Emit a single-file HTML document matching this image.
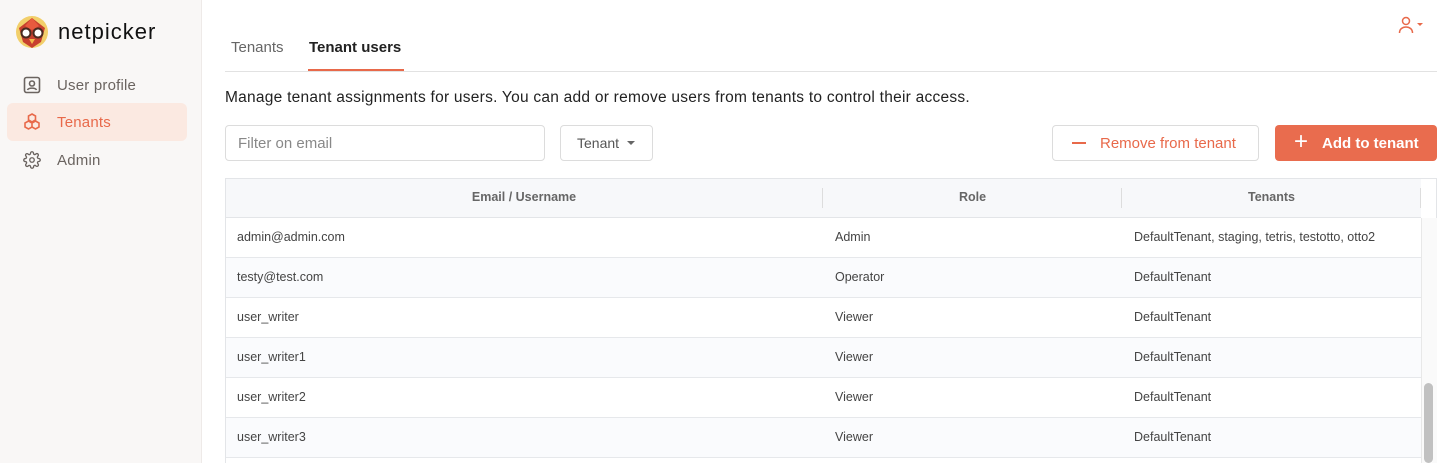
<!DOCTYPE html><html><head><style>
*{box-sizing:border-box;margin:0;padding:0}
html{overflow:hidden}
body{width:1451px;height:463px;overflow:hidden;font-family:"Liberation Sans",sans-serif;background:#fff;position:relative;color:#222}
.sb{position:absolute;left:0;top:0;width:202px;height:463px;background:#f9f7f6;border-right:1px solid #eeeae8}
.logo{position:absolute;left:15px;top:14px;display:flex;align-items:center}
.logo span{font-size:22px;margin-left:9px;color:#111;letter-spacing:1px}
.nav{position:absolute;left:7px;width:180px;height:38px;border-radius:6px;display:flex;align-items:center;padding-left:16px;font-size:15px;color:#6b6460;letter-spacing:.2px}
.nav svg{margin-right:16px}
.act{background:#fbe9e1;color:#e8694a}
.a{position:absolute}
.tab{font-size:15px;top:39px}
.btn{position:absolute;top:125px;height:36px;border-radius:4px;font-size:15px;display:flex;align-items:center}
table{position:absolute;left:225px;top:178px;width:1196px;border-collapse:collapse;font-size:12.5px;color:#444}
th{height:39px;background:#f7f8fa;font-weight:bold;color:#666;border-bottom:1px solid #e3e5e8;position:relative}
td{height:40px;padding-left:12px;border-bottom:1px solid #e6e8eb}
tr:nth-child(odd) td{background:#fafbfd}
</style></head><body>
<div class="sb">
 <div class="logo"><svg width="34" height="36" viewBox="0 0 34 36"><circle cx="17" cy="18" r="16" fill="#f2cf6a"/><path d="M17 4 L30 14 L26 28 L17 34 L8 28 L4 14Z" fill="#c7402e"/><path d="M17 4 L24 12 L17 16 L10 12Z" fill="#e85a3e"/><circle cx="11" cy="19" r="4.5" fill="#fff" stroke="#4a2a20" stroke-width="2"/><circle cx="23" cy="19" r="4.5" fill="#fff" stroke="#4a2a20" stroke-width="2"/><path d="M14 25 L20 25 L17 30Z" fill="#f2b84a"/></svg><span>netpicker</span></div>
 <div class="nav" style="top:66px"><svg width="18" height="18" viewBox="0 0 18 18" fill="none" stroke="#6b6460" stroke-width="1.6"><rect x="1.5" y="1.5" width="15" height="15" rx="2"/><circle cx="9" cy="7.5" r="2.5"/><path d="M4.5 14c1-2.5 8-2.5 9 0"/></svg>User profile</div>
 <div class="nav act" style="top:103px"><svg width="18" height="18" viewBox="0 0 18 18" fill="none" stroke="#e8694a" stroke-width="1.6"><path d="M9 1l3.5 2v4L9 9 5.5 7V3z M5.5 8l3.5 2v4l-3.5 2L2 14v-4z M12.5 8L16 10v4l-3.5 2L9 14v-4z"/></svg>Tenants</div>
 <div class="nav" style="top:141px"><svg width="18" height="18" viewBox="0 0 24 24" fill="none" stroke="#6b6460" stroke-width="1.8"><circle cx="12" cy="12" r="3"/><path d="M19.4 15a1.7 1.7 0 0 0 .3 1.8l.1.1a2 2 0 1 1-2.8 2.8l-.1-.1a1.7 1.7 0 0 0-1.8-.3 1.7 1.7 0 0 0-1 1.5V21a2 2 0 1 1-4 0v-.1a1.7 1.7 0 0 0-1.1-1.5 1.7 1.7 0 0 0-1.8.3l-.1.1a2 2 0 1 1-2.8-2.8l.1-.1a1.7 1.7 0 0 0 .3-1.8 1.7 1.7 0 0 0-1.5-1H3a2 2 0 1 1 0-4h.1a1.7 1.7 0 0 0 1.5-1.1 1.7 1.7 0 0 0-.3-1.8l-.1-.1a2 2 0 1 1 2.8-2.8l.1.1a1.7 1.7 0 0 0 1.8.3H9a1.7 1.7 0 0 0 1-1.5V3a2 2 0 1 1 4 0v.1a1.7 1.7 0 0 0 1 1.5 1.7 1.7 0 0 0 1.8-.3l.1-.1a2 2 0 1 1 2.8 2.8l-.1.1a1.7 1.7 0 0 0-.3 1.8V9a1.7 1.7 0 0 0 1.5 1H21a2 2 0 1 1 0 4h-.1a1.7 1.7 0 0 0-1.5 1z"/></svg>Admin</div>
</div>
<svg class="a" style="left:1398px;top:16px" width="30" height="18" viewBox="0 0 30 18" fill="none" stroke="#e8694a" stroke-width="1.5"><circle cx="8" cy="5" r="3.5"/><path d="M1.5 17c0-4 3-6 6.5-6s6.5 2 6.5 6"/><path d="M19 7h6l-3 3z" fill="#e8694a" stroke="none"/></svg>
<div class="a tab" style="left:231px;color:#666">Tenants</div>
<div class="a tab" style="left:309px;font-weight:bold;color:#222">Tenant users</div>
<div class="a" style="left:308px;top:69px;width:96px;height:2px;background:#e8694a"></div>
<div class="a" style="left:225px;top:71px;width:1212px;height:1px;background:#e2e2e2"></div>
<div class="a" style="left:225px;top:89px;font-size:15.5px;color:#222;letter-spacing:.25px">Manage tenant assignments for users. You can add or remove users from tenants to control their access.</div>
<div class="btn" style="left:225px;width:320px;border:1px solid #dcdcdc;padding-left:12px;color:#888">Filter on email</div>
<div class="btn" style="left:560px;width:93px;border:1px solid #dcdcdc;padding-left:16px;color:#555;font-size:14px">Tenant<span style="margin-left:8px;border:4px solid transparent;border-top:4px solid #666;margin-top:4px"></span></div>
<div class="btn" style="left:1052px;width:207px;border:1px solid #dcdcdc;color:#e8694a;padding-left:19px"><span style="width:14px;height:2px;background:#e8694a;margin-right:14px"></span>Remove from tenant</div>
<div class="btn" style="left:1275px;width:162px;background:#e96c4e;color:#fff;font-weight:bold;padding-left:19px"><span style="font-size:24px;font-weight:normal;margin-right:14px;margin-top:-2px">+</span>Add to tenant</div>
<table>
<tr><th style="width:598px">Email / Username<span style="position:absolute;right:0;top:10px;height:20px;border-right:1px solid #ddd"></span></th><th style="width:299px">Role<span style="position:absolute;right:0;top:10px;height:20px;border-right:1px solid #ddd"></span></th><th>Tenants<span style="position:absolute;right:0;top:10px;height:20px;border-right:1px solid #ddd"></span></th></tr>
<tr><td style="height:38px">admin@admin.com</td><td>Admin</td><td>DefaultTenant, staging, tetris, testotto, otto2</td></tr>
<tr><td>testy@test.com</td><td>Operator</td><td>DefaultTenant</td></tr>
<tr><td>user_writer</td><td>Viewer</td><td>DefaultTenant</td></tr>
<tr><td>user_writer1</td><td>Viewer</td><td>DefaultTenant</td></tr>
<tr><td>user_writer2</td><td>Viewer</td><td>DefaultTenant</td></tr>
<tr><td>user_writer3</td><td>Viewer</td><td>DefaultTenant</td></tr>
</table>
<div class="a" style="left:225px;top:178px;width:1212px;height:285px;border:1px solid #e3e5e8;border-bottom:none"></div>
<div class="a" style="left:1421px;top:218px;width:16px;height:245px;background:#fafafa;border-left:1px solid #e8e8e8"></div>
<div class="a" style="left:1424px;top:383px;width:9px;height:80px;background:#c1c1c1;border-radius:5px"></div>
</body></html>
